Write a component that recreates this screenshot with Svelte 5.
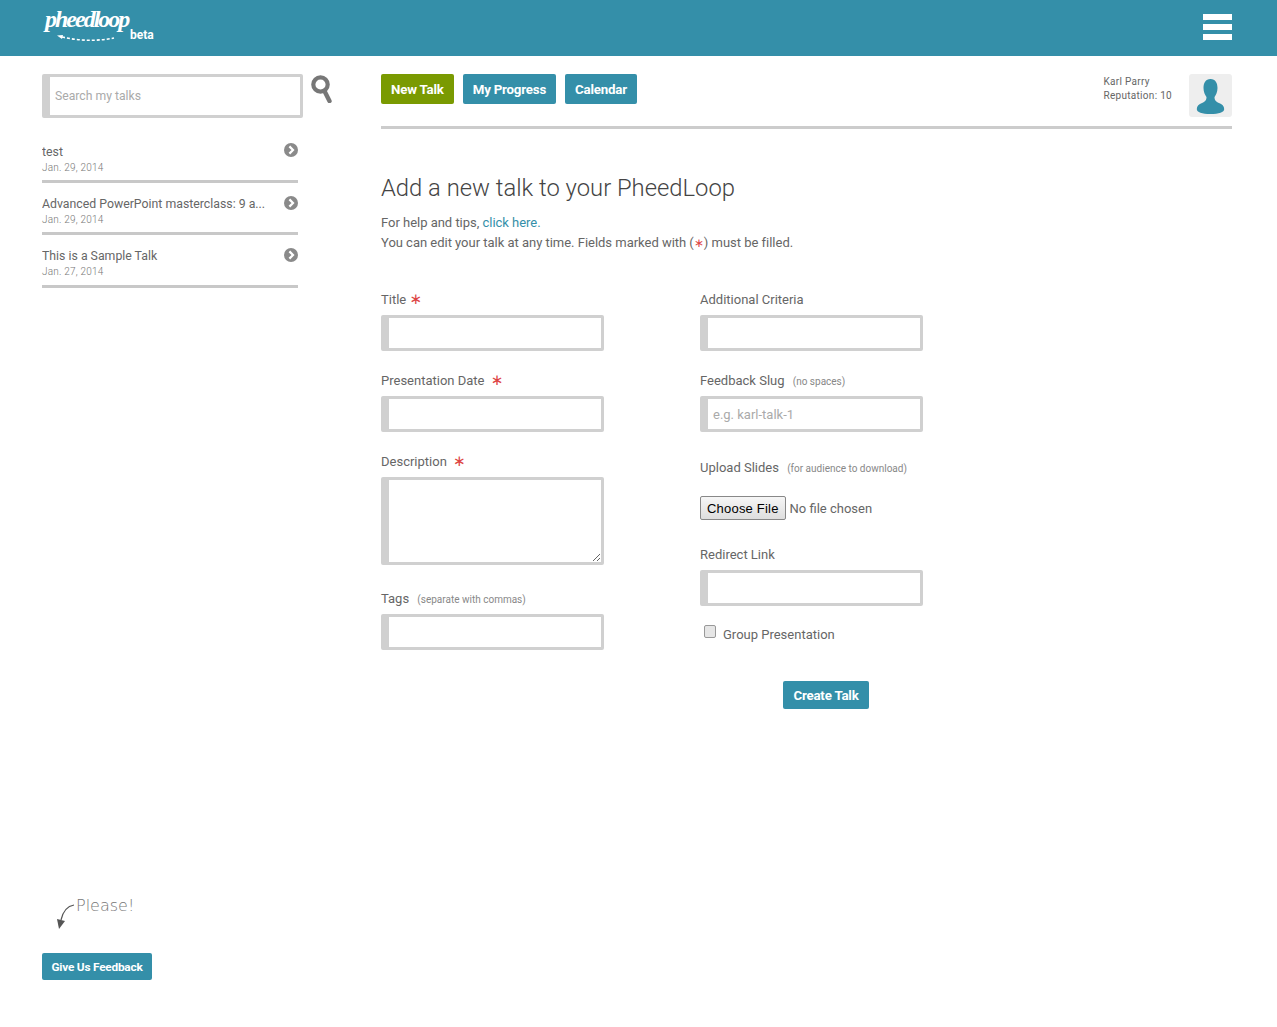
<script>
    const talks = [
        { title: 'test', date: 'Jan. 29, 2014' },
        { title: 'Advanced PowerPoint masterclass: 9 a...', date: 'Jan. 29, 2014' },
        { title: 'This is a Sample Talk', date: 'Jan. 27, 2014' }
    ];
</script>

<div class="page">
    <header class="topbar">
        <a href="#top" class="logo">
            <span class="logo__word">pheedloop</span>
            <svg class="logo__arc" width="72" height="12" viewBox="0 0 72 12">
                <path d="M7 2 L1 2.5 L6 6 Z" fill="#fff" />
                <path d="M6 4 Q32 10 58 5" stroke="#fff" stroke-width="1.6" stroke-dasharray="3 2" fill="none" />
            </svg>
            <span class="logo__beta">beta</span>
        </a>
        <div class="burger"><i></i><i></i><i></i></div>
    </header>

    <div class="layout">
        <aside class="side">
            <div class="search">
                <input type="text" class="search__input" placeholder="Search my talks" />
                <svg class="search__icon" width="21" height="28" viewBox="0 0 21 28">
                    <circle cx="9.5" cy="9.5" r="7.2" fill="none" stroke="#777" stroke-width="4.2" />
                    <path d="M13.5 16 L18.5 26" stroke="#777" stroke-width="4.4" stroke-linecap="round" />
                </svg>
            </div>

            <ul class="talks">
                {#each talks as talk}
                    <li class="talk">
                        <div class="talk__info">
                            <div class="talk__title">{talk.title}</div>
                            <div class="talk__date">{talk.date}</div>
                        </div>
                        <svg class="talk__arrow" width="14" height="14" viewBox="0 0 14 14">
                            <circle cx="7" cy="7" r="7" fill="#8a8a8a" />
                            <path d="M5.4 3.4 L9 7 L5.4 10.6" fill="none" stroke="#fff" stroke-width="2.2" />
                        </svg>
                    </li>
                {/each}
            </ul>

            <div class="feedback">
                <div class="please">
                    <svg width="20" height="26" viewBox="0 0 20 26">
                        <path d="M18 1 C12 2 7 7 5 16" fill="none" stroke="#555" stroke-width="1.2" />
                        <path d="M1 15 L9 17 L3 25 Z" fill="#555" />
                    </svg>
                    <span>Please!</span>
                </div>
                <button class="btn btn--small">Give Us Feedback</button>
            </div>
        </aside>

        <main class="main">
            <div class="toolbar">
                <nav class="toolbar__nav">
                    <button class="btn btn--green">New Talk</button>
                    <button class="btn">My Progress</button>
                    <button class="btn">Calendar</button>
                </nav>
                <div class="user">
                    <div class="user__text">
                        <div>Karl Parry</div>
                        <div>Reputation: 10</div>
                    </div>
                    <div class="user__pic">
                        <svg width="29" height="36" viewBox="0 0 29 36">
                            <path d="M14.5 1 C9.5 1 7.5 5 7.5 10 C7.5 14 9 17 10.5 19 C10.5 22 9.5 23.5 6 25 C3 26.3 .8 28 .8 31 C.8 34.5 6 36 14.5 36 C23 36 28.2 34.5 28.2 31 C28.2 28 26 26.3 23 25 C19.5 23.5 18.5 22 18.5 19 C20 17 21.5 14 21.5 10 C21.5 5 19.5 1 14.5 1 Z" fill="#348fa9" />
                        </svg>
                    </div>
                </div>
            </div>

            <h1 class="title">Add a new talk to your PheedLoop</h1>
            <p class="intro">
                For help and tips, <a href="#help">click here.</a><br />
                You can edit your talk at any time. Fields marked with (<span class="req req--small">∗</span>) must be filled.
            </p>

            <form class="form">
                <div class="col">
                    <label class="field">
                        <span class="label">Title <span class="req">∗</span></span>
                        <input type="text" />
                    </label>
                    <label class="field">
                        <span class="label">Presentation Date <span class="req req--gap">∗</span></span>
                        <input type="text" />
                    </label>
                    <label class="field">
                        <span class="label">Description <span class="req req--gap">∗</span></span>
                        <textarea></textarea>
                    </label>
                    <label class="field field--tags">
                        <span class="label">Tags <small>(separate with commas)</small></span>
                        <input type="text" />
                    </label>
                </div>
                <div class="col">
                    <label class="field">
                        <span class="label">Additional Criteria</span>
                        <input type="text" />
                    </label>
                    <label class="field">
                        <span class="label">Feedback Slug <small>(no spaces)</small></span>
                        <input type="text" placeholder="e.g. karl-talk-1" />
                    </label>
                    <label class="field field--upload">
                        <span class="label">Upload Slides <small>(for audience to download)</small></span>
                        <input type="file" />
                    </label>
                    <label class="field field--redirect">
                        <span class="label">Redirect Link</span>
                        <input type="text" />
                    </label>
                    <label class="check">
                        <input type="checkbox" />
                        <span>Group Presentation</span>
                    </label>
                </div>
            </form>
            <div class="actions">
                <button class="btn btn--create">Create Talk</button>
            </div>
        </main>
    </div>
</div>

<style>
    :global(body) {
        font-family: Roboto, "Liberation Sans", sans-serif;
        color: #555;
        background: #fff;
    }

    .page {
        display: flex;
        flex-direction: column;
        height: 1027px;
        overflow: hidden;
    }

    .topbar {
        display: flex;
        align-items: flex-start;
        justify-content: space-between;
        flex: none;
        height: 56px;
        padding: 0 45px 0 44px;
        background: #348fa9;
    }

    .logo {
        position: relative;
        display: block;
        width: 112px;
        height: 56px;
        color: #fff;
        text-decoration: none;
    }

    .logo__word {
        position: absolute;
        top: 6px;
        left: 1px;
        font-family: "Liberation Serif", serif;
        font-size: 24px;
        font-style: italic;
        font-weight: 700;
        letter-spacing: -2px;
    }

    .logo__arc {
        position: absolute;
        top: 33px;
        left: 12px;
    }

    .logo__beta {
        position: absolute;
        top: 28px;
        left: 86px;
        font-size: 12px;
        font-weight: 700;
    }

    .burger {
        display: flex;
        flex-direction: column;
        gap: 4px;
        width: 29px;
        padding-top: 14px;
    }

    .burger i {
        display: block;
        height: 6px;
        background: #fff;
    }

    .layout {
        display: flex;
        flex: 1 1 auto;
        min-height: 0;
    }

    .side {
        display: flex;
        flex-direction: column;
        flex: none;
        box-sizing: border-box;
        width: 381px;
        padding: 18px 0 47px 42px;
    }

    .search {
        display: flex;
        align-items: flex-start;
        gap: 8px;
    }

    input[type='text'],
    textarea {
        display: block;
        box-sizing: border-box;
        width: 223px;
        height: 36px;
        padding: 0 5px;
        border: 3px solid #d0d0d0;
        border-left-width: 8px;
        border-radius: 2px;
        outline: 0;
        background: #fff;
        font: 13px Roboto, sans-serif;
        color: #555;
    }

    input::placeholder {
        color: #aaa;
        opacity: 1;
    }

    .search__input[type='text'] {
        width: 261px;
        height: 44px;
        padding: 0 0 0 5px;
        font-size: 12.2px;
    }

    .search__icon {
        margin-top: 1px;
    }

    .talks {
        margin: 12px 0 0;
        padding: 0;
        list-style: none;
    }

    .talk {
        display: flex;
        align-items: flex-start;
        justify-content: space-between;
        box-sizing: border-box;
        width: 256px;
        height: 52.5px;
        padding-top: 14px;
        border-bottom: 3px solid #c8c8c8;
    }

    .talk + .talk {
        padding-top: 13px;
    }

    .talk__info {
        width: 224px;
    }

    .talk__title {
        overflow: hidden;
        margin-bottom: 1px;
        font-size: 12.3px;
        line-height: 16px;
        white-space: nowrap;
        color: #666;
    }

    .talk__date {
        font-size: 10px;
        font-weight: 300;
        line-height: 13px;
        letter-spacing: .2px;
        color: #777;
    }

    .talk__arrow {
        margin-top: -1px;
    }

    .talk + .talk .talk__arrow {
        margin-top: 0;
    }

    .feedback {
        margin-top: auto;
    }

    .please {
        display: flex;
        align-items: flex-start;
        height: 52px;
        padding-left: 14px;
        font-family: "DejaVu Sans", sans-serif;
        font-size: 16px;
        font-weight: 300;
        line-height: 20px;
        color: #777;
    }

    .please span {
        margin-top: -5px;
    }

    .please svg {
        margin-top: 3px;
    }

    .btn {
        flex: none;
        height: 30px;
        padding: 0 10px;
        border: 0;
        border-radius: 2px;
        background: #348fa9;
        font: 700 13.3px Roboto, sans-serif;
        letter-spacing: -.2px;
        color: #fff;
    }

    .btn--green {
        background: #7a9a01;
    }

    .btn--small {
        display: block;
        width: 110px;
        height: 27px;
        padding: 0;
        font-size: 11.8px;
    }

    .btn--create {
        width: 86px;
        height: 28px;
        padding: 0;
    }

    .main {
        flex: 1 1 auto;
        margin-right: 45px;
        padding-top: 18px;
    }

    .toolbar {
        display: flex;
        align-items: flex-start;
        justify-content: space-between;
        height: 52px;
        border-bottom: 3px solid #ccc;
    }

    .toolbar__nav {
        display: flex;
        gap: 9px;
    }

    .user {
        display: flex;
        gap: 17px;
    }

    .user__text {
        padding-top: 1px;
        font-size: 10px;
        line-height: 14px;
        letter-spacing: .3px;
        color: #666;
    }

    .user__pic {
        display: flex;
        align-items: center;
        justify-content: center;
        width: 43px;
        height: 43px;
        border-radius: 3px;
        background: #eee;
    }

    .title {
        margin: 43px 0 0;
        font-size: 23.8px;
        font-weight: 300;
        line-height: 32px;
        color: #444;
    }

    .intro {
        margin: 9px 0 0;
        font-size: 13px;
        line-height: 20px;
        letter-spacing: -.02px;
        color: #666;
    }

    .intro a {
        color: #348fa9;
        text-decoration: none;
    }

    .req {
        font-family: "DejaVu Sans", sans-serif;
        font-size: 15px;
        line-height: 1;
        color: #d44;
    }

    .req--small {
        font-size: 12px;
    }

    .req--gap {
        margin-left: 3px;
    }

    .form {
        display: flex;
        gap: 96px;
        margin-top: 37px;
    }

    .col {
        width: 223px;
    }

    .field {
        display: block;
        margin-bottom: 20px;
    }

    .label {
        display: block;
        height: 20px;
        margin-bottom: 5px;
        font-size: 13px;
        line-height: 20px;
        color: #666;
    }

    .label small {
        margin-left: 5px;
        font-size: 10px;
        font-weight: 400;
        color: #888;
    }

    textarea {
        height: 88px;
        padding: 4px;
        resize: vertical;
    }

    .field--tags {
        margin-top: 24px;
    }

    .field--upload {
        margin-top: 26px;
        margin-bottom: 0;
    }

    .field--upload .label {
        margin-bottom: 18px;
    }

    .field--upload input {
        display: block;
        width: 223px;
        font: 13px Roboto, sans-serif;
        color: #666;
    }

    .field--upload input::file-selector-button {
        height: 24px;
        margin-right: 4px;
        border: 1px solid #888;
        border-radius: 2px;
        background: linear-gradient(#f6f6f6, #dedede);
        letter-spacing: .2px;
    }

    .field--redirect {
        margin-top: 25px;
    }

    .check {
        display: flex;
        align-items: flex-start;
        gap: 7px;
        margin-top: -1px;
        margin-left: 4px;
        font-size: 13px;
        line-height: 20px;
        color: #666;
    }

    .check input {
        appearance: none;
        width: 12px;
        height: 13px;
        margin: 0;
        border: 1px solid #999;
        border-radius: 2px;
        background: #e6e6e6;
    }

    .actions {
        display: flex;
        margin-top: 11px;
        padding-left: 402px;
    }
</style>
